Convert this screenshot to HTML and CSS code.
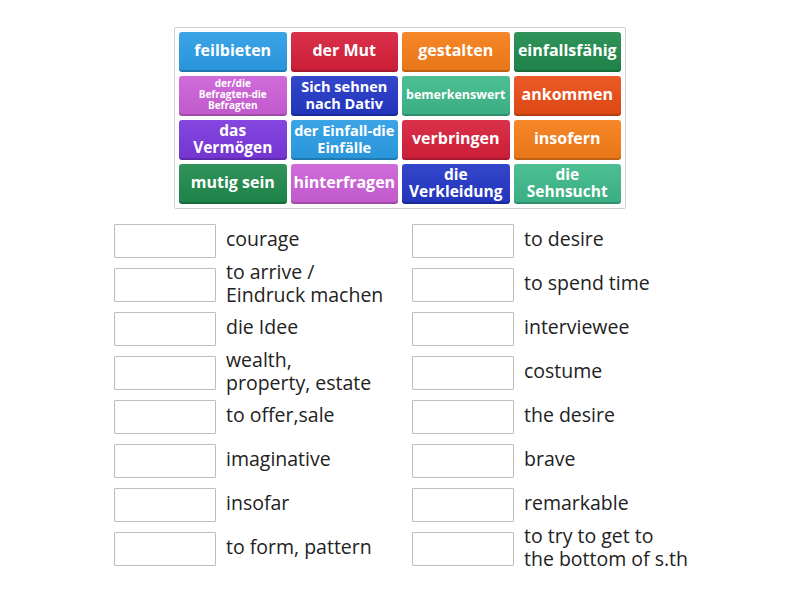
FILE: index.html
```html
<!DOCTYPE html>
<html>
<head>
<meta charset="utf-8">
<link rel="stylesheet" href="styles.css">
</head>
<body>
<div class="page">
  <div class="bank">
    <div class="tile c-blue">feilbieten</div>
    <div class="tile c-red">der Mut</div>
    <div class="tile c-orange">gestalten</div>
    <div class="tile c-green">einfallsfähig</div>

    <div class="tile c-orchid tiny">der/die<br>Befragten-die<br>Befragten</div>
    <div class="tile c-navy two narrow">Sich sehnen<br>nach Dativ</div>
    <div class="tile c-teal small">bemerkenswert</div>
    <div class="tile c-flame">ankommen</div>

    <div class="tile c-purple two">das<br>Vermögen</div>
    <div class="tile c-blue two narrow">der Einfall-die<br>Einfälle</div>
    <div class="tile c-red">verbringen</div>
    <div class="tile c-orange">insofern</div>

    <div class="tile c-green">mutig sein</div>
    <div class="tile c-orchid">hinterfragen</div>
    <div class="tile c-navy two">die<br>Verkleidung</div>
    <div class="tile c-teal two">die<br>Sehnsucht</div>
  </div>

  <div class="answers">
    <div class="col">
      <div class="row"><div class="slot"></div><div class="label">courage</div></div>
      <div class="row"><div class="slot"></div><div class="label">to arrive /<br>Eindruck machen</div></div>
      <div class="row"><div class="slot"></div><div class="label">die Idee</div></div>
      <div class="row"><div class="slot"></div><div class="label">wealth,<br>property, estate</div></div>
      <div class="row"><div class="slot"></div><div class="label">to offer,sale</div></div>
      <div class="row"><div class="slot"></div><div class="label">imaginative</div></div>
      <div class="row"><div class="slot"></div><div class="label">insofar</div></div>
      <div class="row"><div class="slot"></div><div class="label">to form, pattern</div></div>
    </div>
    <div class="col">
      <div class="row"><div class="slot"></div><div class="label">to desire</div></div>
      <div class="row"><div class="slot"></div><div class="label">to spend time</div></div>
      <div class="row"><div class="slot"></div><div class="label">interviewee</div></div>
      <div class="row"><div class="slot"></div><div class="label">costume</div></div>
      <div class="row"><div class="slot"></div><div class="label">the desire</div></div>
      <div class="row"><div class="slot"></div><div class="label">brave</div></div>
      <div class="row"><div class="slot"></div><div class="label">remarkable</div></div>
      <div class="row"><div class="slot"></div><div class="label">to try to get to<br>the bottom of s.th</div></div>
    </div>
  </div>
</div>
</body>
</html>
```

FILE: styles.css
```css
html, body {
  margin: 0;
  padding: 0;
  background: #ffffff;
}

.page {
  width: 800px;
  height: 600px;
  padding-top: 27px;
  box-sizing: border-box;
  font-family: "Open Sans", "Liberation Sans", sans-serif;
}

.bank {
  width: 452px;
  box-sizing: border-box;
  margin: 0 auto;
  border: 1px solid #cfcfcf;
  border-radius: 2px;
  padding: 4px;
  display: grid;
  grid-template-columns: repeat(4, 1fr);
  grid-auto-rows: 40px;
  gap: 4px;
}

.tile {
  display: flex;
  align-items: center;
  justify-content: center;
  text-align: center;
  color: #ffffff;
  font-weight: 700;
  font-size: 16px;
  line-height: 17px;
  padding-bottom: 3px;
  box-sizing: border-box;
  border-radius: 3px;
  background-image: linear-gradient(to bottom, rgba(255,255,255,0.08), rgba(0,0,0,0.06));
  box-shadow: inset 0 -2px 0 rgba(0,0,0,0.18);
}

.tile.two {
  font-size: 15.5px;
}

.tile.narrow {
  font-size: 14.5px;
}

.tile.tiny {
  font-size: 10px;
  line-height: 11px;
}

.tile.small {
  font-size: 12.5px;
}

.c-blue   { background-color: #2b9de6; }
.c-red    { background-color: #d71f3a; }
.c-orange { background-color: #f57d17; }
.c-green  { background-color: #1f8a4c; }
.c-orchid { background-color: #cc5fd7; }
.c-navy   { background-color: #2337c6; }
.c-teal   { background-color: #3db98a; }
.c-flame  { background-color: #ea4c15; }
.c-purple { background-color: #7a37dd; }

.answers {
  display: flex;
  padding-left: 114px;
  margin-top: 15px;
}

.col {
  width: 298px;
  display: flex;
  flex-direction: column;
  gap: 10px;
}

.row {
  display: flex;
  align-items: center;
  height: 34px;
  gap: 10px;
}

.slot {
  width: 102px;
  height: 34px;
  flex: none;
  box-sizing: border-box;
  border: 1px solid #bdbdbd;
  border-radius: 1px;
  background: #ffffff;
}

.label {
  font-size: 19.5px;
  line-height: 23px;
  padding-bottom: 5px;
  color: #222222;
  white-space: nowrap;
}
```
